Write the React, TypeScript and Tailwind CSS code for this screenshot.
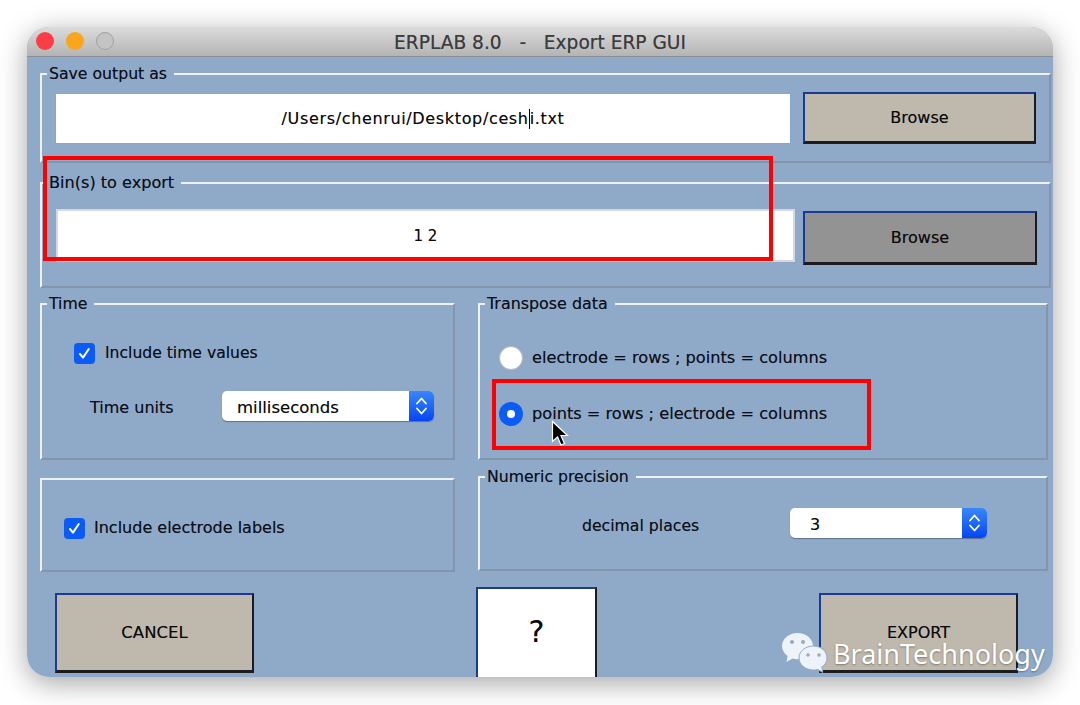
const font = { fontFamily: '"DejaVu Sans", sans-serif' };

function Group({ label, labelSize = "text-[15.7px]", className, children }: { label?: string; labelSize?: string; className: string; children?: React.ReactNode }) {
  return (
    <div
      className={`relative shrink-0 border-t-2 border-l-2 border-r-2 border-b-2 border-t-[#eef2f7] border-l-[#eef2f7] border-r-[#8494ab] border-b-[#8494ab] ${className}`}
    >
      {label && (
        <span className={`absolute -top-[11px] left-[5px] bg-[#8fa9c8] pl-[2px] pr-[7px] leading-[20px] text-[#0a0f18] ${labelSize}`}>
          {label}
        </span>
      )}
      {children}
    </div>
  );
}

function JavaButton({ className, children }: { className: string; children: React.ReactNode }) {
  return (
    <div
      className={`flex shrink-0 items-center justify-center border-t-2 border-l-2 border-r-2 border-b-[3px] border-t-[#1b3a92] border-l-[#1b3a92] border-r-[#1c1c1c] border-b-[#1c1c1c] text-[#0a0a0a] ${className}`}
    >
      {children}
    </div>
  );
}

function Check() {
  return (
    <div className="flex h-[21px] w-[21px] shrink-0 items-center justify-center rounded-[4px] bg-[#0a5cf5]">
      <svg width="15" height="15" viewBox="0 0 15 15" fill="none">
        <path d="M3 8l3 3.6L11.8 3" stroke="#fff" strokeWidth="2" strokeLinecap="round" strokeLinejoin="round" />
      </svg>
    </div>
  );
}

function Select({ value, className }: { value: string; className: string }) {
  return (
    <div className={`flex h-[30px] shrink-0 overflow-hidden rounded-[5px] bg-white text-[#0a0a0a] shadow-[0_1px_1px_rgba(40,60,90,0.5)] ${className}`}>
      <div className="flex flex-1 items-center pt-[3px]">{value}</div>
      <div className="flex w-[25px] items-center justify-center bg-gradient-to-b from-[#3a86fb] to-[#0744f0]">
        <svg width="13" height="20" viewBox="0 0 13 20" fill="none">
          <path d="M2 7.500l4.500-5 4.500 5M2 12.500l4.500 5 4.500-5" stroke="#fff" strokeWidth="1.8" strokeLinecap="round" strokeLinejoin="round" />
        </svg>
      </div>
    </div>
  );
}

export default function App() {
  return (
    <div className="h-[705px] w-[1080px] overflow-hidden bg-white pt-[27px] pl-[27px] [text-shadow:0_0_0.5px_rgba(0,0,0,0.45)]" style={font}>
      <div className="relative h-[650px] w-[1026px] rounded-[22px] shadow-[0_6px_28px_rgba(0,0,0,0.36)]">
        <div className="h-full w-full overflow-hidden rounded-[22px] bg-[#8fa9c8]">
          {/* title bar */}
          <div className="relative flex h-[30px] items-center justify-center border-b border-[#8a8f96] bg-gradient-to-b from-[#dcdcdc] to-[#b4b4b4] pt-[3px]">
            <div className="absolute left-[9px] top-[5px] flex gap-[12px]">
              <div className="h-[18px] w-[18px] rounded-full bg-[#fb3d45]" />
              <div className="h-[18px] w-[18px] rounded-full bg-[#f9a61e]" />
              <div className="h-[18px] w-[18px] rounded-full border border-[#a0a0a0] bg-[#c4c4c4]" />
            </div>
            <span className="whitespace-pre text-[18.600px] text-[#3c3c3c]">ERPLAB 8.0   -   Export ERP GUI</span>
          </div>

          <div className="flex flex-col pt-[16px] pl-[13px]">
            <Group label="Save output as" className="h-[90px] w-[1011px]">
              <div className="flex items-start pt-[18px] pl-[13px]">
                <div className="flex h-[51px] w-[736px] items-center justify-center border border-[#7fa9d8] bg-white pt-[1px] text-[16px] tracking-[0.65px] text-[#0a0a0a]">
                  <span>/Users/chenrui/Desktop/cesh</span>
                  <span className="inline-block h-[20px] w-0 border-l border-black" />
                  <span>i.txt</span>
                </div>
                <JavaButton className="ml-[12px] -mt-[1px] h-[52px] w-[233px] bg-[#bfb8ac] pt-[1px] text-[16px]">Browse</JavaButton>
              </div>
            </Group>

            <Group label="Bin(s) to export" labelSize="text-[16.100px]" className="mt-[19px] h-[106px] w-[1011px]">
              <div className="flex items-start pt-[25px] pl-[14px]">
                <div className="flex h-[53px] w-[739px] items-center justify-center border-2 border-[#d5d8dc] bg-white pt-[2px] text-[15px] text-[#0a0a0a]">
                  1 2
                </div>
                <JavaButton className="ml-[8px] mt-[2px] h-[54px] w-[234px] bg-[#939393] pt-[1px] text-[16px]">Browse</JavaButton>
              </div>
            </Group>

            <div className="mt-[15px] flex gap-[23px]">
              <Group label="Time" className="h-[157px] w-[415px]">
                <div className="flex items-center gap-[10px] pt-[37px] pl-[32px] text-[15.600px] text-[#0a0f18]">
                  <Check />
                  <span>Include time values</span>
                </div>
                <div className="mt-[26px] flex items-center pl-[48px] text-[16px] text-[#0a0f18]">
                  <span className="w-[132px] pt-[3px]">Time units</span>
                  <Select value="milliseconds" className="w-[212px] pl-[15px] text-[16.500px]" />
                </div>
              </Group>
              <Group label="Transpose data" labelSize="text-[15.900px]" className="h-[157px] w-[570px]">
                <div className="flex items-center gap-[9px] pt-[40px] pl-[19px] text-[16.200px] text-[#0a0f18]">
                  <div className="h-[24px] w-[24px] rounded-full border border-[#b8b8b8] bg-white" />
                  <span className="pt-[1px]">electrode = rows ; points = columns</span>
                </div>
                <div className="mt-[31px] flex items-center gap-[9px] pl-[19px] text-[16.200px] text-[#0a0f18]">
                  <div className="flex h-[24px] w-[24px] items-center justify-center rounded-full bg-[#0a5cf5]">
                    <div className="h-[8px] w-[8px] rounded-full bg-white" />
                  </div>
                  <span className="pt-[1px]">points = rows ; electrode = columns</span>
                </div>
              </Group>
            </div>

            <div className="mt-[16px] flex items-start gap-[23px]">
              <Group className="mt-[2px] h-[94px] w-[415px]">
                <div className="flex items-center gap-[9px] pt-[36px] pl-[22px] text-[16px] text-[#0a0f18]">
                  <Check />
                  <span>Include electrode labels</span>
                </div>
              </Group>
              <Group label="Numeric precision" className="h-[95px] w-[570px]">
                <div className="flex items-center pt-[30px] pl-[102px] text-[15.700px] text-[#0a0f18]">
                  <span className="w-[208px] pt-[6px]">decimal places</span>
                  <Select value="3" className="w-[197px] pl-[20px] text-[16px]" />
                </div>
              </Group>
            </div>

            <div className="flex items-start pl-[15px]">
              <JavaButton className="mt-[21px] h-[80px] w-[199px] bg-[#bfb8ac] pt-[1px] text-[16.500px]">CANCEL</JavaButton>
              <JavaButton className="ml-[222px] mt-[15px] h-[100px] w-[121px] bg-white pb-[10px] text-[30px]">?</JavaButton>
              <JavaButton className="ml-[222px] mt-[21px] h-[80px] w-[199px] bg-[#bfb8ac] pt-[1px] text-[16px]">EXPORT</JavaButton>
            </div>
          </div>
        </div>

        {/* annotation boxes */}
        <div className="absolute left-[16px] top-[129px] h-[105px] w-[730px] border-4 border-[#ff0000]" />
        <div className="absolute left-[465px] top-[352px] h-[71px] w-[379px] border-4 border-[#ff0000]" />

        {/* cursor */}
        <svg className="absolute left-[524px] top-[393px]" width="20" height="27" viewBox="0 0 20 27">
          <path d="M1.500 1.500v20l5-4.500 3.500 8 3.500-1.500-3.500-8h6.500z" fill="#000" stroke="#fff" strokeWidth="1.2" />
        </svg>

        {/* watermark */}
        <div className="absolute left-[754px] top-[605px] flex items-center">
          <svg width="47" height="42" viewBox="0 0 47 42">
            <path d="M16.500 1C8 1 1 6.800 1 14c0 4 2.200 7.500 5.600 9.900L5.500 30l6-3.400c1.600.4 3.200.6 5 .6 8.500 0 15.500-5.900 15.500-13.200S25 1 16.500 1z" fill="#eef3f9" />
            <path d="M32.500 14C24.500 14 18 19.300 18 26s6.500 12 14.500 12c1.500 0 3-.2 4.300-.6l5 3-1-5.300c3.400-2.200 5.200-5.500 5.200-9.100 0-6.700-6-12-13.500-12z" fill="#eef3f9" stroke="#8fa9c8" strokeWidth="1" />
            <circle cx="11" cy="10" r="2" fill="#9aa9bb" />
            <circle cx="22" cy="10" r="2" fill="#9aa9bb" />
            <circle cx="27" cy="23" r="1.800" fill="#9aa9bb" />
            <circle cx="38" cy="23" r="1.800" fill="#9aa9bb" />
          </svg>
          <span className="ml-[5px] text-[27px] leading-none text-white [text-shadow:0_1px_2px_rgba(0,0,0,0.35)]" style={{ fontFamily: '"Noto Sans", sans-serif' }}>
            BrainTechnology
          </span>
        </div>
      </div>
    </div>
  );
}
